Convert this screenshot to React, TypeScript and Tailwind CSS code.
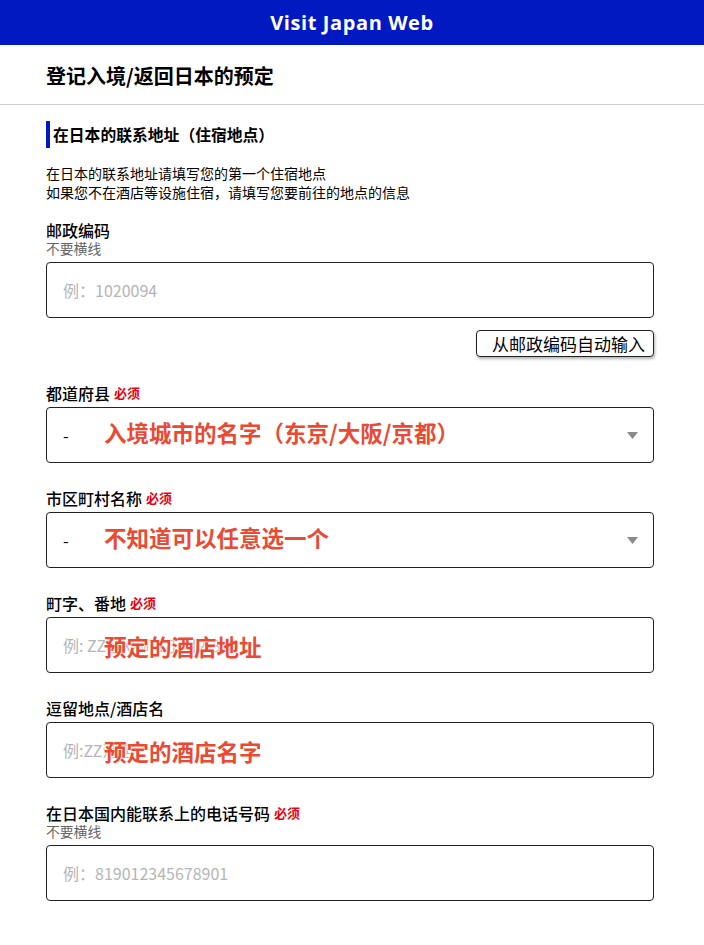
import React from "react";

const CJK = "font-['Noto_Sans_CJK_SC','Noto_Sans',sans-serif]";

function Required() {
  return <span className="ml-[4px] text-[13px] font-bold text-[#e60012]">必须</span>;
}

function Label({ text, required, sub }: { text: string; required?: boolean; sub?: string }) {
  return (
    <div className={sub ? "mb-[6px]" : "mb-[4px]"}>
      <div className="flex items-center h-[20px] text-[16px] font-medium text-black leading-[20px]">
        <span>{text}</span>
        {required && <Required />}
      </div>
      {sub && <div className="h-[16px] text-[13.8px] leading-[16px] text-[#666]">{sub}</div>}
    </div>
  );
}

function Overlay({ text, raised }: { text: string; raised?: boolean }) {
  return (
    <span
      className={`absolute left-[57px] top-1/2 -translate-y-1/2 ${raised ? "-mt-[3px]" : "mt-[1px]"} text-[22.5px] font-bold text-[#ea4a33] leading-none whitespace-nowrap [text-shadow:0_0_2px_#fff,0_0_2px_#fff,0_0_2px_#fff]`}
    >
      {text}
    </span>
  );
}

function InputBox({ placeholder, overlay }: { placeholder: string; overlay?: string }) {
  return (
    <div className="relative h-[56px] rounded-[4px] border border-[#222] bg-white flex items-center pl-[16px]">
      <span className="text-[16px] text-[#b5b5b5]">{placeholder}</span>
      {overlay && <Overlay text={overlay} />}
    </div>
  );
}

function SelectBox({ overlay }: { overlay?: string }) {
  return (
    <div className="relative h-[56px] rounded-[4px] border border-[#222] bg-white flex items-center pl-[16px] pr-[16px] justify-between">
      <span className="text-[16px] text-black">-</span>
      <svg width="11" height="7" viewBox="0 0 11 7" className="mr-[-1px]">
        <polygon points="0,0 11,0 5.5,7" fill="#8a8a8a" />
      </svg>
      {overlay && <Overlay text={overlay} raised />}
    </div>
  );
}

export default function App() {
  return (
    <div className={`${CJK} w-[704px] min-h-[945px] bg-white text-black`}>
      <header className="h-[45px] bg-[#0119c1] flex items-center justify-center">
        <span className="font-['Open_Sans',sans-serif] text-[20px] font-bold text-white tracking-[0.6px]">
          Visit Japan Web
        </span>
      </header>

      <div className="h-[60px] border-b border-[#cfcfcf] flex items-center pl-[46px] pt-[2px]">
        <h1 className="text-[20px] font-bold">登记入境/返回日本的预定</h1>
      </div>

      <div className="ml-[46px] w-[608px] pb-[40px]">
        <div className="mt-[16px] h-[27px] border-l-[4px] border-[#0119c1] pl-[3px] flex items-center">
          <h2 className="text-[15.8px] font-bold">在日本的联系地址（住宿地点）</h2>
        </div>

        <div className="mt-[16px] text-[14px] leading-[19px]">
          <p>在日本的联系地址请填写您的第一个住宿地点</p>
          <p>如果您不在酒店等设施住宿，请填写您要前往的地点的信息</p>
        </div>

        <div className="mt-[18px]">
          <Label text="邮政编码" sub="不要横线" />
          <InputBox placeholder="例：1020094" />
          <div className="flex justify-end mt-[12px]">
            <button className="h-[27px] w-[178px] rounded-[4px] border border-[#222] bg-white pl-[15px] text-left text-[17px] leading-none shadow-[1px_2px_3px_rgba(0,0,0,0.3)]">
              从邮政编码自动输入
            </button>
          </div>
        </div>

        <div className="mt-[26px]">
          <Label text="都道府县" required />
          <SelectBox overlay="入境城市的名字（东京/大阪/京都）" />
        </div>

        <div className="mt-[25px]">
          <Label text="市区町村名称" required />
          <SelectBox overlay="不知道可以任意选一个" />
        </div>

        <div className="mt-[25px]">
          <Label text="町字、番地" required />
          <InputBox placeholder="例: ZZ区XX町1丁目2-345" overlay="预定的酒店地址" />
        </div>

        <div className="mt-[25px]">
          <Label text="逗留地点/酒店名" />
          <InputBox placeholder="例:ZZ酒店" overlay="预定的酒店名字" />
        </div>

        <div className="mt-[25px]">
          <Label text="在日本国内能联系上的电话号码" required sub="不要横线" />
          <InputBox placeholder="例：819012345678901" />
        </div>
      </div>
    </div>
  );
}
